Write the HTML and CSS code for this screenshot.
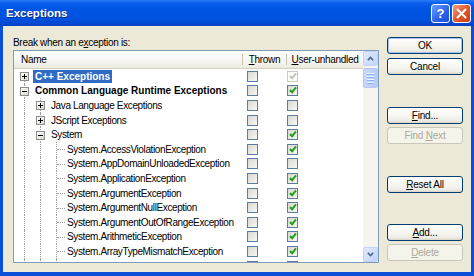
FILE: index.html
```html
<!DOCTYPE html>
<html lang="en">
<head>
    <meta charset="UTF-8">
    <title>Exceptions</title>
    <link rel="stylesheet" href="styles.css">
</head>
<body>
    <div class="window">
        <div class="titlebar">
            <span class="title">Exceptions</span>
            <div class="caption-buttons">
                <span class="cap help">?</span>
                <span class="cap close">
                    <svg width="11" height="11" viewBox="0 0 11 11"><path d="M1.5 1.5 L9.5 9.5 M9.5 1.5 L1.5 9.5" stroke="#fff" stroke-width="2" stroke-linecap="round"/></svg>
                </span>
            </div>
        </div>

        <div class="content">
            <div class="main">
                <div class="prompt">Break when an e<u>x</u>ception is:</div>

                <div class="listview">
                    <div class="list">
                        <div class="header">
                            <div class="hcell col-name">Name</div>
                            <div class="hcell col-thrown center"><span><u>T</u>hrown</span></div>
                            <div class="hcell col-user center"><span><u>U</u>ser-unhandled</span></div>
                        </div>

                        <div class="row">
                            <div class="col-name"><span class="node first"><span class="toggle plus"></span></span><span class="label selected">C++ Exceptions</span></div>
                            <div class="col-thrown"><span class="check"></span></div>
                            <div class="col-user"><span class="check dim on"></span></div>
                        </div>
                        <div class="row">
                            <div class="col-name"><span class="node"><span class="toggle minus"></span></span><span class="label bold">Common Language Runtime Exceptions</span></div>
                            <div class="col-thrown"><span class="check"></span></div>
                            <div class="col-user"><span class="check on"></span></div>
                        </div>
                        <div class="row">
                            <div class="col-name"><span class="guide"></span><span class="node"><span class="toggle plus"></span></span><span class="label">Java Language Exceptions</span></div>
                            <div class="col-thrown"><span class="check"></span></div>
                            <div class="col-user"><span class="check"></span></div>
                        </div>
                        <div class="row">
                            <div class="col-name"><span class="guide"></span><span class="node"><span class="toggle plus"></span></span><span class="label">JScript Exceptions</span></div>
                            <div class="col-thrown"><span class="check"></span></div>
                            <div class="col-user"><span class="check"></span></div>
                        </div>
                        <div class="row">
                            <div class="col-name"><span class="guide"></span><span class="node"><span class="toggle minus"></span></span><span class="label">System</span></div>
                            <div class="col-thrown"><span class="check"></span></div>
                            <div class="col-user"><span class="check on"></span></div>
                        </div>
                        <div class="row">
                            <div class="col-name"><span class="guide"></span><span class="guide"></span><span class="leaf"></span><span class="label">System.AccessViolationException</span></div>
                            <div class="col-thrown"><span class="check"></span></div>
                            <div class="col-user"><span class="check on"></span></div>
                        </div>
                        <div class="row">
                            <div class="col-name"><span class="guide"></span><span class="guide"></span><span class="leaf"></span><span class="label">System.AppDomainUnloadedException</span></div>
                            <div class="col-thrown"><span class="check"></span></div>
                            <div class="col-user"><span class="check"></span></div>
                        </div>
                        <div class="row">
                            <div class="col-name"><span class="guide"></span><span class="guide"></span><span class="leaf"></span><span class="label">System.ApplicationException</span></div>
                            <div class="col-thrown"><span class="check"></span></div>
                            <div class="col-user"><span class="check on"></span></div>
                        </div>
                        <div class="row">
                            <div class="col-name"><span class="guide"></span><span class="guide"></span><span class="leaf"></span><span class="label">System.ArgumentException</span></div>
                            <div class="col-thrown"><span class="check"></span></div>
                            <div class="col-user"><span class="check on"></span></div>
                        </div>
                        <div class="row">
                            <div class="col-name"><span class="guide"></span><span class="guide"></span><span class="leaf"></span><span class="label">System.ArgumentNullException</span></div>
                            <div class="col-thrown"><span class="check"></span></div>
                            <div class="col-user"><span class="check on"></span></div>
                        </div>
                        <div class="row">
                            <div class="col-name"><span class="guide"></span><span class="guide"></span><span class="leaf"></span><span class="label">System.ArgumentOutOfRangeException</span></div>
                            <div class="col-thrown"><span class="check"></span></div>
                            <div class="col-user"><span class="check on"></span></div>
                        </div>
                        <div class="row">
                            <div class="col-name"><span class="guide"></span><span class="guide"></span><span class="leaf"></span><span class="label">System.ArithmeticException</span></div>
                            <div class="col-thrown"><span class="check"></span></div>
                            <div class="col-user"><span class="check on"></span></div>
                        </div>
                        <div class="row">
                            <div class="col-name"><span class="guide"></span><span class="guide"></span><span class="leaf"></span><span class="label">System.ArrayTypeMismatchException</span></div>
                            <div class="col-thrown"><span class="check"></span></div>
                            <div class="col-user"><span class="check on"></span></div>
                        </div>
                        <!-- next row only peeks in at the bottom edge -->
                        <div class="row">
                            <div class="col-name"><span class="guide"></span><span class="guide"></span><span class="leaf"></span></div>
                            <div class="col-thrown"><span class="check"></span></div>
                            <div class="col-user"><span class="check on"></span></div>
                        </div>
                    </div>

                    <div class="scrollbar">
                        <div class="sb-btn">
                            <svg width="7" height="5" viewBox="0 0 7 5"><path d="M0.8 4.2 L3.5 1.5 L6.2 4.2" fill="none" stroke="#4d6185" stroke-width="1.6"/></svg>
                        </div>
                        <div class="sb-thumb"><span></span><span></span><span></span><span></span></div>
                        <div class="sb-track"></div>
                        <div class="sb-btn">
                            <svg width="7" height="5" viewBox="0 0 7 5"><path d="M0.8 0.8 L3.5 3.5 L6.2 0.8" fill="none" stroke="#4d6185" stroke-width="1.6"/></svg>
                        </div>
                    </div>
                </div>
            </div>

            <div class="buttons">
                <div class="btn default"><span>OK</span></div>
                <div class="btn gap-sm"><span>Cancel</span></div>
                <div class="btn gap-lg"><span><u>F</u>ind...</span></div>
                <div class="btn gap-xs disabled"><span>Find <u>N</u>ext</span></div>
                <div class="btn gap-lg"><span><u>R</u>eset All</span></div>
                <div class="btn gap-md"><span><u>A</u>dd...</span></div>
                <div class="btn gap-xs disabled"><span><u>D</u>elete</span></div>
            </div>
        </div>
    </div>
</body>
</html>
```

FILE: styles.css
```css
body {
    margin: 0;
    font-family: "Liberation Sans", Arial, sans-serif;
    font-size: 10px;
    color: #000;
}
.window {
    width: 474px;
    height: 276px;
    background: #0a4fd8;
    display: flex;
    flex-direction: column;
    overflow: hidden;
}
.titlebar {
    height: 26px;
    flex: none;
    display: flex;
    align-items: center;
    justify-content: space-between;
    padding: 0 3px 0 6px;
    background: linear-gradient(#2c7cf6 0%, #0b5fee 12%, #0054e3 35%, #0052e0 70%, #0049d2 90%, #003fba 100%);
}
.title {
    color: #fff;
    font-weight: bold;
    font-size: 11.5px;
    text-shadow: 1px 1px 0 #0a2a8a;
}
.caption-buttons {
    display: flex;
    gap: 2px;
}
.cap {
    width: 17px;
    height: 17px;
    border: 1px solid #fff;
    border-radius: 3px;
    display: flex;
    align-items: center;
    justify-content: center;
    color: #fff;
    font-weight: bold;
    font-size: 13px;
}
.help {
    background: linear-gradient(135deg, #6b9cff, #2a62ea 60%, #1a4fd6);
}
.close {
    background: linear-gradient(135deg, #f0a080, #e2582e 50%, #c9401a);
}
.content {
    flex: 1;
    margin: 0 3px 4px 3px;
    background: #ece9d8;
    display: flex;
    padding: 10px 8px 0 10px;
}
.main {
    width: 366px;
}
.prompt {
    height: 13px;
    line-height: 13px;
    letter-spacing: -0.3px;
    margin-bottom: 1px;
}
.listview {
    height: 211px;
    border: 1px solid #7f9db9;
    background: #fff;
    display: flex;
}
.list {
    width: 349px;
    overflow: hidden;
}
.header {
    height: 18px;
    display: flex;
    background: linear-gradient(#ffffff, #f4f3ee 70%, #ebeadb);
    border-bottom: 1px solid #d6d2c2;
    box-sizing: border-box;
}
.hcell {
    display: flex;
    align-items: center;
    border-right: 1px solid #c7c5b2;
    margin: 3px 0;
    letter-spacing: -0.3px;
}
.hcell.col-name {
    padding-left: 7px;
}
.hcell.col-user {
    border-right: none;
}
.center {
    justify-content: center;
}
.col-name {
    width: 229px;
    flex: none;
    box-sizing: border-box;
}
.col-thrown {
    width: 44px;
    flex: none;
    box-sizing: border-box;
}
.col-user {
    width: 76px;
    flex: none;
    box-sizing: border-box;
}
.row {
    height: 14.6px;
    display: flex;
    align-items: center;
}
.row .col-name {
    height: 100%;
    display: flex;
    align-items: center;
    padding-left: 2px;
    white-space: nowrap;
}
.row .col-thrown {
    padding-left: 4px;
    display: flex;
}
.row .col-user {
    display: flex;
}
.label {
    padding: 0 2px;
    margin-left: 1px;
    line-height: 13px;
    letter-spacing: -0.38px;
}
.label.bold {
    font-weight: bold;
    letter-spacing: 0;
}
.label.selected {
    background: #316ac5;
    color: #fff;
    font-weight: bold;
    letter-spacing: 0;
}

/* tree lines */
.guide, .node, .leaf {
    width: 16px;
    height: 100%;
    flex: none;
    position: relative;
}
.guide::before, .node::before, .leaf::before {
    content: "";
    position: absolute;
    left: 8px;
    top: 0;
    bottom: 0;
    border-left: 1px dotted #a0a0a0;
}
.node.first::before {
    top: 50%;
}
.leaf::after {
    content: "";
    position: absolute;
    left: 9px;
    right: -1px;
    top: 50%;
    border-top: 1px dotted #a0a0a0;
}
.toggle {
    position: absolute;
    left: 4px;
    top: 50%;
    width: 7px;
    height: 7px;
    margin-top: -4px;
    border: 1px solid #8c8c8c;
    background: linear-gradient(135deg, #fff, #dcd9cc);
    z-index: 1;
}
.toggle::before {
    content: "";
    position: absolute;
    left: 1px;
    top: 3px;
    width: 5px;
    height: 1px;
    background: #000;
}
.toggle.plus::after {
    content: "";
    position: absolute;
    left: 3px;
    top: 1px;
    width: 1px;
    height: 5px;
    background: #000;
}

/* checkboxes */
.check {
    width: 9px;
    height: 9px;
    border: 1px solid #5b7ba0;
    background: linear-gradient(135deg, #d9d8d0, #f8f8f5);
    position: relative;
}
.check.on::after {
    content: "";
    position: absolute;
    left: 3px;
    top: 0;
    width: 2px;
    height: 5px;
    border: solid #21a121;
    border-width: 0 2px 2px 0;
    transform: rotate(40deg);
}
.check.dim {
    border-color: #cdcbbf;
    background: #fbfbf8;
}
.check.dim::after {
    border-color: #c4c4c4;
}

/* scrollbar */
.scrollbar {
    width: 15px;
    display: flex;
    flex-direction: column;
    background: #f5f4ee;
}
.sb-btn {
    height: 15px;
    flex: none;
    border: 1px solid #c3d3fd;
    border-radius: 2px;
    box-sizing: border-box;
    background: linear-gradient(135deg, #e1eafe, #c1d3fb);
    display: flex;
    align-items: center;
    justify-content: center;
}
.sb-thumb {
    height: 20px;
    margin-top: 2px;
    border: 1px solid #b3c8f5;
    border-radius: 2px;
    box-sizing: border-box;
    background: linear-gradient(90deg, #c9d8fc, #b8cdf8);
    display: flex;
    flex-direction: column;
    align-items: center;
    justify-content: center;
    gap: 1px;
}
.sb-thumb span {
    width: 7px;
    height: 1px;
    background: #eef4fe;
    border-bottom: 1px solid #8cb0f8;
}
.sb-track {
    flex: 1;
}

/* buttons */
.buttons {
    width: 76px;
    margin-left: 8px;
    padding-top: 1px;
    display: flex;
    flex-direction: column;
}
.btn {
    height: 17px;
    box-sizing: border-box;
    border: 1px solid #003c74;
    border-radius: 3px;
    background: linear-gradient(#ffffff, #f7f6f1 50%, #ecebe4 85%, #d8d5c8);
    display: flex;
    align-items: center;
    justify-content: center;
    letter-spacing: -0.2px;
}
.btn.default {
    box-shadow: inset 0 0 0 1px #a9c6f2;
}
.btn.disabled {
    border-color: #c9c7ba;
    background: #f5f4ea;
    color: #aca899;
}
.gap-xs { margin-top: 3px; }
.gap-sm { margin-top: 4px; }
.gap-md { margin-top: 31px; }
.gap-lg { margin-top: 32px; }
```
